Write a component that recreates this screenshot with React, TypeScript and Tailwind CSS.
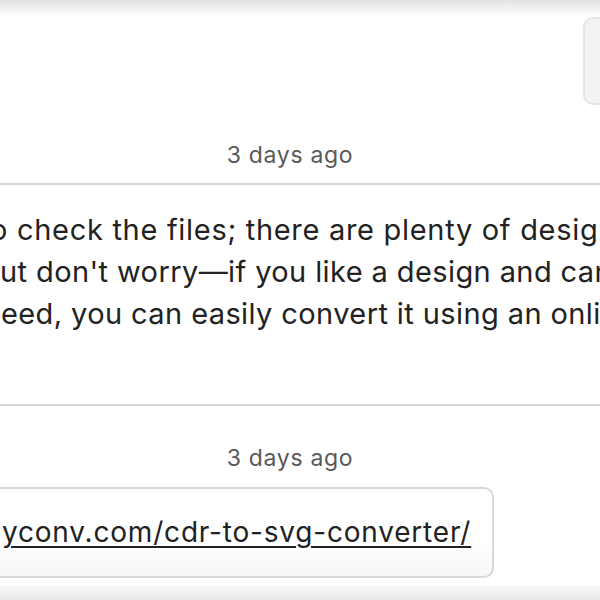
import React from "react";

const line = "text-[29px] leading-[42px] text-[#222222] whitespace-nowrap";
const stamp =
  "h-[30px] pr-[20px] text-center text-[23px] leading-[30px] tracking-[0.7px] text-[#595959] shrink-0";

export default function App() {
  return (
    <div className="w-[600px] h-[600px] overflow-hidden bg-white flex flex-col font-['Inter',sans-serif]">
      {/* header shadow */}
      <div className="h-4 shrink-0 bg-gradient-to-b from-[#e2e2e2] to-white" />

      {/* outgoing bubble, mostly off-screen */}
      <div className="flex justify-end shrink-0">
        <div className="w-[40px] h-[88px] -mr-[23px] mt-px rounded-[10px] bg-[#f3f3f3] border-2 border-[#e6e6e6]" />
      </div>

      {/* timestamp */}
      <div className={`mt-[35px] ${stamp}`}>3 days ago</div>

      {/* incoming message */}
      <div className="mt-[13px] -mx-[20px] border-y-2 border-[#d6d6d6] pt-[24px] pb-[69px] shrink-0">
        <div className="flex flex-col">
          <div className={`${line} tracking-[0.7px] pl-[10px]`}>o check the files; there are plenty of designs available,</div>
          <div className={`${line} tracking-[0.4px] pl-[20px]`}>ut don't worry—if you like a design and can't find the</div>
          <div className={`${line} tracking-[0.4px] pl-[21px]`}>eed, you can easily convert it using an online tool.</div>
        </div>
      </div>

      {/* timestamp */}
      <div className={`mt-[37px] ${stamp}`}>3 days ago</div>

      {/* link message */}
      <div className="mt-[14px] -ml-[20px] w-[514px] h-[91px] rounded-r-[10px] border-2 border-[#d8d8d8] bg-gradient-to-b from-white from-60% to-[#f6f6f6] pt-[22px] shrink-0">
        <div className="text-[28px] leading-[42px] tracking-[0.8px] text-[#222222] whitespace-nowrap pl-[20px]">
          <span className="underline underline-offset-[4px] decoration-[2px]">yconv.com/cdr-to-svg-converter/</span>
        </div>
      </div>

      {/* composer shadow */}
      <div className="flex-1 mt-[8px] bg-gradient-to-b from-[#f6f6f6] to-[#e8e8e8]" />
    </div>
  );
}
